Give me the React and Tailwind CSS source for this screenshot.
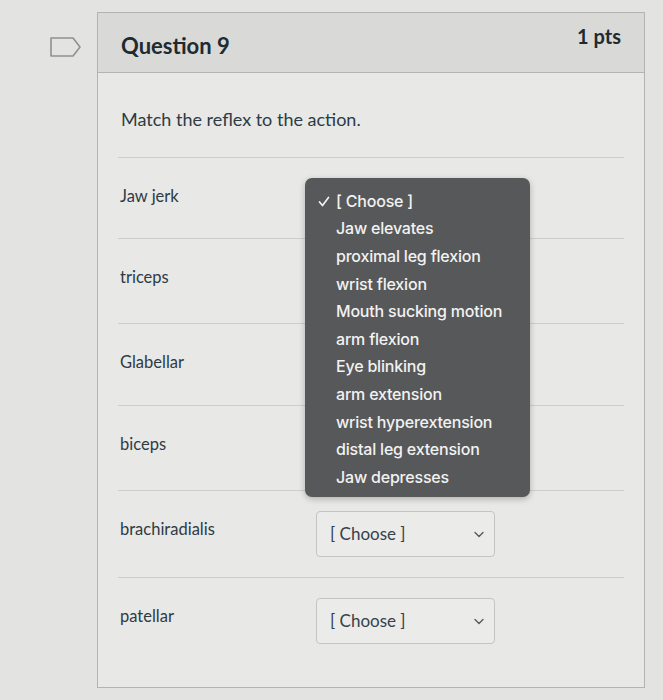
import React from "react";

const rows = [
  { label: "Jaw jerk", h: "h-[81px]" },
  { label: "triceps", h: "h-[85px]" },
  { label: "Glabellar", h: "h-[82px]" },
  { label: "biceps", h: "h-[85px]" },
  { label: "brachiradialis", h: "h-[87px]" },
  { label: "patellar", h: "h-[83px]" },
];
const options = [
  "[ Choose ]",
  "Jaw elevates",
  "proximal leg flexion",
  "wrist flexion",
  "Mouth sucking motion",
  "arm flexion",
  "Eye blinking",
  "arm extension",
  "wrist hyperextension",
  "distal leg extension",
  "Jaw depresses",
];

function Select({ hidden }) {
  return (
    <div
      className={`w-[179px] h-[46px] border border-[#c4c4c2] rounded-[4px] bg-[#ebebe9] flex items-center justify-between pl-[13px] pr-[10px] ${hidden ? "invisible" : ""}`}
    >
      <span className="text-[17px] text-[#34414b]">[ Choose ]</span>
      <svg width="10" height="7" viewBox="0 0 10 7" fill="none">
        <path d="M1 1.5 L5 5.5 L9 1.5" stroke="#555c62" strokeWidth="1.4" strokeLinecap="round" strokeLinejoin="round" />
      </svg>
    </div>
  );
}

export default function App() {
  return (
    <div
      className="w-[663px] h-[700px] bg-[#e3e3e1] relative flex overflow-hidden"
      style={{ fontFamily: "Lato, 'Liberation Sans', sans-serif" }}
    >
      <div className="w-[97px] shrink-0 pt-[37px] pl-[50px]">
        <svg width="32" height="20" viewBox="0 0 32 20" fill="none">
          <path d="M1 1 H23 L30 10 L23 19 H1 Z" stroke="#8f9193" strokeWidth="1.6" strokeLinejoin="round" />
        </svg>
      </div>
      <div className="mt-[12px] w-[548px] h-[676px] border border-[#b3b3b1] flex flex-col bg-[#e8e8e6]">
        <div className="h-[60px] bg-[#d9d9d7] border-b border-[#b3b3b1] flex justify-between px-[23px] shrink-0">
          <div className="pt-[19px] text-[22px] font-bold text-[#202a31] leading-[28px]">Question 9</div>
          <div className="pt-[10px] text-[20px] font-bold text-[#202a31] leading-[26px]">1 pts</div>
        </div>
        <div className="px-[20px] flex flex-col">
          <div className="pt-[34px] pl-[3px] text-[18px] leading-[24px] text-[#2d3b45]">Match the reflex to the action.</div>
          <div className="mt-[26px] border-t border-[#cdcdcb]" />
          {rows.map((r, i) => (
            <div
              key={r.label}
              className={`flex ${r.h} items-start ${i < rows.length - 1 ? "border-b border-[#cdcdcb]" : ""}`}
            >
              <div className="w-[198px] pl-[2px] pt-[27px] text-[16.5px] leading-[22px] text-[#2d3b45]">{r.label}</div>
              <div className="pt-[20px]">
                <Select hidden={i < 4} />
              </div>
            </div>
          ))}
        </div>
      </div>
      <div
        className="absolute left-[305px] top-[178px] w-[225px] h-[319px] rounded-[7px] bg-[#575859] pt-[9px] shadow-[0_2px_6px_rgba(0,0,0,0.25)]"
        style={{ fontFamily: "Inter, 'Liberation Sans', sans-serif" }}
      >
        {options.map((o, i) => (
          <div key={o} className="relative h-[27.6px] flex items-center pl-[31px] text-[16px] font-medium text-[#f2f2f2] tracking-[-0.2px]">
            {i === 0 && (
              <svg className="absolute left-[13px] top-[9px]" width="12" height="11" viewBox="0 0 12 11" fill="none">
                <path d="M1.5 6 L4.5 9.5 L10.5 1.5" stroke="#f2f2f2" strokeWidth="1.7" strokeLinecap="round" strokeLinejoin="round" />
              </svg>
            )}
            {o}
          </div>
        ))}
      </div>
    </div>
  );
}
